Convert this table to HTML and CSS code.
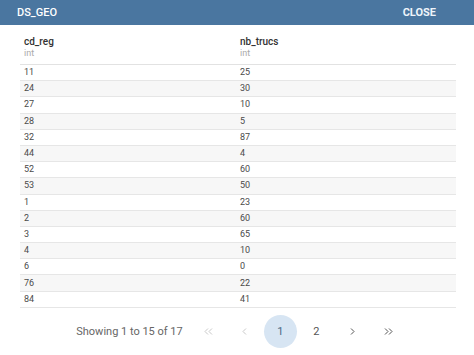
FILE: index.html
```html
<!DOCTYPE html>
<html>
<head>
<meta charset="utf-8">
<link rel="stylesheet" href="styles.css">
</head>
<body>
<div class="topbar">
  <span class="title">DS_GEO</span>
  <span class="close">CLOSE</span>
</div>
<div class="content">
  <table class="grid">
    <colgroup><col class="c1"><col class="c2"></colgroup>
    <thead>
      <tr>
        <th><div class="colname">cd_reg</div><div class="coltype">int</div></th>
        <th><div class="colname">nb_trucs</div><div class="coltype">int</div></th>
      </tr>
    </thead>
    <tbody>
      <tr><td>11</td><td>25</td></tr>
      <tr><td>24</td><td>30</td></tr>
      <tr><td>27</td><td>10</td></tr>
      <tr><td>28</td><td>5</td></tr>
      <tr><td>32</td><td>87</td></tr>
      <tr><td>44</td><td>4</td></tr>
      <tr><td>52</td><td>60</td></tr>
      <tr><td>53</td><td>50</td></tr>
      <tr><td>1</td><td>23</td></tr>
      <tr><td>2</td><td>60</td></tr>
      <tr><td>3</td><td>65</td></tr>
      <tr><td>4</td><td>10</td></tr>
      <tr><td>6</td><td>0</td></tr>
      <tr><td>76</td><td>22</td></tr>
      <tr><td>84</td><td>41</td></tr>
    </tbody>
  </table>
  <div class="pager">
    <span class="showing">Showing 1 to 15 of 17</span>
    <span class="pbtn disabled"><svg width="9" height="7" viewBox="0 0 9 7"><polyline points="4,0.5 1,3.5 4,6.5" /><polyline points="8,0.5 5,3.5 8,6.5" /></svg></span>
    <span class="pbtn disabled"><svg width="5" height="7" viewBox="0 0 5 7"><polyline points="4,0.5 1,3.5 4,6.5" /></svg></span>
    <span class="pbtn active">1</span>
    <span class="pbtn">2</span>
    <span class="pbtn"><svg width="5" height="7" viewBox="0 0 5 7"><polyline points="1,0.5 4,3.5 1,6.5" /></svg></span>
    <span class="pbtn"><svg width="9" height="7" viewBox="0 0 9 7"><polyline points="1,0.5 4,3.5 1,6.5" /><polyline points="5,0.5 8,3.5 5,6.5" /></svg></span>
  </div>
</div>
</body>
</html>
```

FILE: styles.css
```css
html, body {
  margin: 0;
  padding: 0;
  background: #ffffff;
  font-family: Roboto, "Liberation Sans", Arial, sans-serif;
}

.topbar {
  height: 25px;
  background: #4a76a0;
  display: flex;
  align-items: center;
  justify-content: space-between;
  padding: 0 38px 0 17px;
  color: #ffffff;
  font-size: 11px;
}

.title {
  font-weight: 500;
}

.close {
  font-weight: 700;
  color: #eef4fa;
}

.content {
  padding: 0 18px 0 20px;
}

.grid {
  width: 100%;
  border-collapse: collapse;
  table-layout: fixed;
}

.c1 {
  width: 216px;
}

.grid th {
  text-align: left;
  font-weight: 500;
  padding: 11px 4px 6px 4px;
  border-bottom: 1px solid #e2e2e2;
}

.colname {
  font-size: 10px;
  line-height: 12px;
  color: #333333;
}

.coltype {
  font-size: 9px;
  line-height: 10px;
  color: #aaaaaa;
  font-weight: 400;
}

.grid td {
  height: 15.2px;
  padding: 0 4px;
  font-size: 9px;
  color: #4a4a4a;
  border-bottom: 1px solid #e6e6e6;
  line-height: 15px;
}

.grid tbody tr:nth-child(even) td {
  background: #f7f7f7;
}

.pager {
  display: flex;
  justify-content: center;
  align-items: center;
  margin-top: 7px;
  padding-left: 5px;
}

.showing {
  font-size: 11px;
  color: #666666;
  margin-right: 6px;
}

.pbtn {
  width: 33px;
  height: 33px;
  margin-left: 3px;
  border-radius: 50%;
  display: flex;
  align-items: center;
  justify-content: center;
  font-size: 11px;
  color: #555555;
}

.pbtn svg {
  fill: none;
  stroke: #555555;
  stroke-width: 1;
}

.pbtn.disabled svg {
  stroke: #c8c8c8;
}

.pbtn.active {
  background: #d7e5f3;
  color: #4d6a86;
}
```
